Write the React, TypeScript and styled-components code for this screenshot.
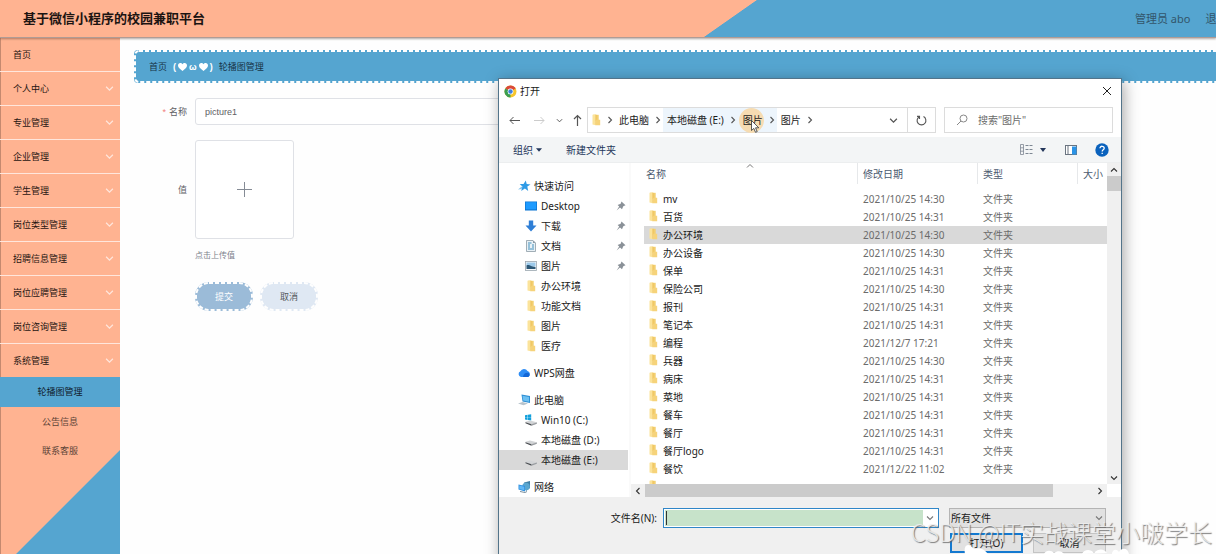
import React from "react";
import styled, { createGlobalStyle, css } from "styled-components";

const BLUE = "#55a5d0";
const PEACH = "#ffb391";

const GlobalStyle = createGlobalStyle`
  *, *::before, *::after { box-sizing: border-box; }
  body {
    margin: 0;
    background: #fefefe;
    color: #222;
    font: 9px/14px "Liberation Sans", "Noto Sans CJK SC", sans-serif;
  }
  button, input, select { font: inherit; color: inherit; margin: 0; }
  a { color: inherit; text-decoration: none; }
  ul { list-style: none; margin: 0; padding: 0; }
`;

const Page = styled.div`
  position: relative;
  display: flex;
  flex-direction: column;
  height: 100vh;
  overflow: hidden;
`;

/* ---------- admin page ---------- */

const Header = styled.header`
  position: relative;
  z-index: 1;
  display: flex;
  align-items: center;
  justify-content: space-between;
  flex: none;
  height: 38px;
  padding-left: 23px;
  background: linear-gradient(145deg, ${PEACH} 59.6%, ${BLUE} 59.7%);
  border-bottom: 1px solid #b09c95;
  box-shadow: 0 1px 2px rgba(60, 40, 30, 0.4);
`;

const Title = styled.h1`
  margin: 0;
  font-size: 13px;
  line-height: 20px;
  font-weight: 700;
  color: #1c1412;
`;

const Account = styled.nav`
  display: flex;
  gap: 15px;
  width: 81px;
  overflow: hidden;
  white-space: nowrap;
  font: 11px/16px "Noto Sans", "Noto Sans CJK SC", sans-serif;
  color: #33566b;
`;

const Body = styled.div`
  display: flex;
  flex: 1;
  min-height: 0;
`;

const Sidebar = styled.nav`
  flex: none;
  width: 120px;
  background: linear-gradient(135deg, ${PEACH} calc(100% - 74px), ${BLUE} calc(100% - 73px));
  box-shadow: inset 1px 0 0 rgba(90, 60, 50, 0.35);
`;

const MenuLink = styled.a`
  display: flex;
  align-items: center;
  justify-content: space-between;
  height: 34px;
  padding: 0 6px 0 13px;
  border-bottom: 1px solid #ffe6dc;
  color: #1f1511;
`;

const MenuItem = styled.li`
  &:last-child > ${MenuLink} { height: 33px; border-bottom: 0; }
`;

const SubLink = styled.a<{ $active?: boolean }>`
  display: flex;
  align-items: center;
  justify-content: center;
  height: 29px;
  color: #5c4337;
  ${(p) => p.$active && css`
    height: 30px;
    background: ${BLUE};
    color: #10202c;
  `}
`;

const Main = styled.main`
  flex: 1;
  min-width: 0;
  padding: 12px 0 0 14px;
  overflow: hidden;
`;

const Breadcrumb = styled.nav`
  position: relative;
  display: flex;
  align-items: center;
  gap: 6px;
  height: 33px;
  margin-right: -20px;
  padding-left: 15px;
  border-radius: 4px;
  background: ${BLUE};
  color: #173447;
`;

const Face = styled.span`
  display: flex;
  align-items: center;
  gap: 2px;
  color: #fff;
  font-weight: 700;
`;

const Frame = styled.svg`
  position: absolute;
  inset: 0;
  width: 100%;
  height: 100%;
  fill: none;
  stroke: #fefefe;
  stroke-width: 2px;
  stroke-dasharray: 4 2;
  rect { width: calc(100% - 2px); height: calc(100% - 2px); }
`;

const Form = styled.form`
  display: flex;
  flex-direction: column;
  gap: 15px;
  margin-right: -20px;
  padding-top: 15px;
`;

const Field = styled.div`
  display: flex;
  align-items: center;
  gap: 8px;
`;

const Label = styled.label`
  flex: none;
  width: 53px;
  text-align: right;
  color: #5e6065;
`;

const Star = styled.span`
  margin-right: 3px;
  color: #f28080;
`;

const TextBox = styled.input`
  flex: 0 0 60%;
  min-width: 0;
  height: 27px;
  padding: 0 9px;
  border: 1px solid #dfe1e6;
  border-radius: 3px;
  background: #fff;
  color: #5e6065;
  outline: none;
`;

const Upload = styled.button`
  display: flex;
  align-items: center;
  justify-content: center;
  width: 99px;
  height: 99px;
  padding: 0;
  border: 1px solid #dfe1e6;
  border-radius: 3px;
  background: #fff;
`;

const Hint = styled.p`
  margin: -5px 0 0 61px;
  font-size: 8px;
  line-height: 14px;
  color: #7d828c;
`;

const Actions = styled.div`
  display: flex;
  gap: 7px;
  margin: 4px 0 0 61px;
`;

const Pill = styled.button<{ $primary?: boolean }>`
  position: relative;
  width: 58px;
  height: 29px;
  padding: 0;
  border: 0;
  border-radius: 14px;
  background: ${(p) => (p.$primary ? "#9bbbd8" : "#dfe8f3")};
  color: ${(p) => (p.$primary ? "#fff" : "#55585e")};
`;

/* ---------- file dialog ---------- */

const Dialog = styled.section`
  position: absolute;
  z-index: 2;
  top: 78px;
  right: 94px;
  width: 624px;
  display: flex;
  flex-direction: column;
  border: 1px solid #53748a;
  background: #fff;
  box-shadow: 2px 3px 14px rgba(0, 0, 0, 0.35);
  font: 10px/16px "Noto Sans", "Noto Sans CJK SC", sans-serif;
  color: #1a1a1a;
`;

const TitleBar = styled.header`
  display: flex;
  align-items: center;
  gap: 3px;
  height: 24px;
  padding: 0 8px 0 5px;
`;

const DialogTitle = styled.h2`
  flex: 1;
  margin: 0;
  font-size: 10px;
  line-height: 14px;
  font-weight: 400;
`;

const IconButton = styled.button<{ $w?: number }>`
  display: flex;
  align-items: center;
  justify-content: center;
  flex: none;
  width: ${(p) => p.$w ?? 12}px;
  height: 100%;
  padding: 0;
  border: 0;
  background: none;
`;

const NavBar = styled.div`
  display: flex;
  align-items: center;
  height: 26px;
  margin: 4px 8px 4px 7px;
`;

const Arrows = styled.div`
  display: flex;
  align-items: center;
  gap: 8px;
  width: 81px;
  height: 26px;
`;

const Address = styled.div`
  display: flex;
  align-items: center;
  flex: 1;
  height: 26px;
  border: 1px solid #dcdcdc;
`;

const Crumbs = styled.ol`
  display: flex;
  align-items: center;
  flex: 1;
  height: 100%;
  margin: 0;
  padding: 0;
  list-style: none;
`;

const Crumb = styled.li<{ $hot?: boolean }>`
  display: flex;
  align-items: center;
  height: 100%;
  background: ${(p) => (p.$hot ? "#edf5fc" : "none")};
`;

const CrumbButton = styled.button`
  position: relative;
  height: 100%;
  padding: 0 4px;
  border: 0;
  background: none;
`;

const CrumbText = styled.span`
  position: relative;
`;

const Halo = styled.span`
  position: absolute;
  left: 0;
  top: 0;
  width: 25px;
  height: 25px;
  border-radius: 50%;
  background: #f6dcb2;
`;

const Pointer = styled.svg`
  position: absolute;
  left: 12px;
  top: 12px;
`;

const Refresh = styled(IconButton)`
  border-left: 1px solid #dcdcdc;
`;

const Search = styled.label`
  display: flex;
  align-items: center;
  gap: 10px;
  width: 169px;
  height: 26px;
  margin-left: 8px;
  padding-left: 11px;
  border: 1px solid #dcdcdc;
`;

const SearchInput = styled.input`
  flex: 1;
  min-width: 0;
  padding: 0;
  border: 0;
  outline: none;
  background: none;
  &::placeholder { color: #6b6b6b; opacity: 1; }
`;

const Toolbar = styled.div`
  display: flex;
  align-items: center;
  height: 26px;
  padding: 0 6px 0 10px;
  border-bottom: 1px solid #eceeef;
  background: #f3f5f6;
  color: #23365a;
`;

const ToolButton = styled.button`
  display: flex;
  align-items: center;
  gap: 3px;
  padding: 0 4px;
  margin-right: 16px;
  border: 0;
  background: none;
`;

const ToolGroup = styled.div`
  display: flex;
  align-items: center;
  margin-left: auto;
  height: 100%;
`;

const Panes = styled.div`
  display: flex;
  height: 334px;
`;

const Tree = styled.nav`
  display: flex;
  flex-direction: column;
  gap: 7px;
  flex: none;
  width: 132px;
  padding-top: 13px;
  border-right: 2px solid #fafafa;
`;

const TreeLink = styled.a<{ $level: number; $on?: boolean }>`
  display: flex;
  align-items: center;
  gap: ${(p) => (p.$level ? 4 : 3)}px;
  height: 20px;
  margin-right: 1px;
  padding: 0 2px 0 ${(p) => (p.$level ? 26 : 19)}px;
  background: ${(p) => (p.$on ? "#d9d9d9" : "none")};
  svg:first-child { flex: none; }
  svg:nth-of-type(2) { margin-left: auto; }
`;

const Files = styled.div`
  display: flex;
  flex-direction: column;
  flex: 1;
  min-width: 0;
`;

const FilesBody = styled.div`
  display: flex;
  height: 321px;
`;

const TableClip = styled.div`
  flex: 1;
  min-width: 0;
  overflow: hidden;
  padding-left: 13px;
`;

const Table = styled.table`
  width: 100%;
  table-layout: fixed;
  border-collapse: separate;
  border-spacing: 0;
  tbody::before { content: ""; display: block; height: 6px; }
`;

const Th = styled.th<{ $w?: number }>`
  position: relative;
  width: ${(p) => (p.$w ? `${p.$w}px` : "auto")};
  height: 21px;
  padding: 0 0 0 5px;
  border-right: 1px solid #e6e8ea;
  text-align: left;
  font-weight: 400;
  color: #4c5a70;
  white-space: nowrap;
  &:first-child { padding-left: 2px; }
  &:last-child { border-right: 0; }
`;

const SortMark = styled.svg`
  position: absolute;
  left: 102px;
  top: 0;
`;

const Row = styled.tr<{ $on?: boolean }>`
  background: ${(p) => (p.$on ? "#d9d9d9" : "none")};
`;

const Td = styled.td`
  height: 18px;
  padding: 0 0 0 5px;
  color: #6b6b6b;
  white-space: nowrap;
`;

const FileName = styled.span`
  display: flex;
  align-items: center;
  gap: 5px;
  height: 18px;
  color: #1a1a1a;
  svg { margin-bottom: 2px; }
`;

const VScroll = styled.div`
  display: flex;
  flex-direction: column;
  justify-content: space-between;
  width: 14px;
  background: #f0f0f0;
`;

const VTop = styled.div`
  display: flex;
  flex-direction: column;
`;

const VThumb = styled.div`
  height: 15px;
  background: #cbcbcb;
`;

const HScroll = styled.div`
  display: flex;
  height: 13px;
  margin: 0 14px 0 0;
  background: #f0f0f0;
`;

const HThumb = styled.div`
  flex: 0 0 408px;
  margin-right: auto;
  background: #cbcbcb;
`;

const ArrowCell = styled.span`
  display: flex;
  align-items: center;
  justify-content: center;
  flex: none;
  width: 14px;
  height: 13px;
`;

const Footer = styled.footer`
  display: flex;
  flex-direction: column;
  gap: 5px;
  padding: 11px 15px 24px 0;
  background: #f0f0f0;
`;

const FooterRow = styled.div`
  display: flex;
  justify-content: flex-end;
  gap: 10px;
`;

const NameField = styled.div`
  display: flex;
  align-items: center;
  gap: 6px;
`;

const Combo = styled.div`
  display: flex;
  width: 276px;
  height: 20px;
  padding: 1px;
  border: 1px solid #2f86c8;
  background: #fff;
`;

const ComboInput = styled.input`
  flex: 1;
  min-width: 0;
  border: 0;
  outline: none;
  padding: 0 2px;
  background: linear-gradient(#333, #333) 1px 50% / 1px 14px no-repeat #c7e3ca;
`;

const SelectBox = styled.div`
  position: relative;
  width: 157px;
  height: 20px;
  svg { position: absolute; right: 3px; top: 6px; pointer-events: none; }
`;

const Select = styled.select`
  appearance: none;
  width: 100%;
  height: 100%;
  padding: 0 1px;
  border: 1px solid #b4b4b4;
  border-radius: 0;
  background: #e1e1e1;
`;

const DialogButton = styled.button<{ $primary?: boolean }>`
  width: 73px;
  height: 20px;
  padding: 0;
  border: ${(p) => (p.$primary ? "2px solid #1479d0" : "1px solid #c4c4c4")};
  background: #e1e1e1;
`;

const Watermark = styled.div`
  position: absolute;
  z-index: 3;
  right: 4px;
  bottom: 4px;
  white-space: nowrap;
  font: 300 24px/36px "Noto Sans CJK SC", sans-serif;
  color: rgba(240, 240, 240, 0.85);
  text-shadow: 1px 1px 1px rgba(90, 90, 90, 0.8);
  pointer-events: none;
`;

const Smudge = styled.svg`
  position: absolute;
  z-index: 3;
  right: 76px;
  bottom: 0;
  pointer-events: none;
`;

/* ---------- icons ---------- */

type Dir = "up" | "down" | "left" | "right";
const CHEVRONS: Record<Dir, string> = {
  up: "M1 5.5 4 2.5 7 5.5",
  down: "M1 2.5 4 5.5 7 2.5",
  left: "M5.5 1 2.5 4 5.5 7",
  right: "M2.5 1 5.5 4 2.5 7",
};

const Chevron = ({ dir, color = "#555", size = 8 }: { dir: Dir; color?: string; size?: number }) => (
  <svg width={size} height={size} viewBox="0 0 8 8" fill="none" stroke={color} strokeWidth="1.1">
    <path d={CHEVRONS[dir]} />
  </svg>
);

const Heart = () => (
  <svg width="9" height="8" viewBox="0 0 9 8" fill="#fff">
    <path d="M4.5 8C2 6 0 4.600 0 2.500 0 1 1 0 2.300 0c.9 0 1.700.5 2.200 1.300C5 .5 5.800 0 6.700 0 8 0 9 1 9 2.500 9 4.600 7 6 4.500 8z" />
  </svg>
);

const FolderShape = () => (
  <>
    <path d="M1 .800h5.700v6H1z" fill="#f3cf70" />
    <path d="M.5.800 3.800.3v10.900L.5 10.600z" fill="#fbe39a" />
    <path d="M3.500.800h1v10h-1z" fill="#eec25a" />
    <path d="M4.300 5.800h3.900v5.400H3.500z" fill="#f6d37a" />
  </>
);

const Folder = () => (
  <svg width="9" height="12" viewBox="0 0 9 12"><FolderShape /></svg>
);

const Pin = () => (
  <svg width="10" height="10" viewBox="0 0 10 10" fill="#8a9198">
    <path d="M5.500.5 9.500 4.300 8.300 4.800 7.300 5.200 6 8.300 4 6.400.6 9.500 3.200 5.600 1.600 4 4.700 2.700 5 1.700z" />
  </svg>
);

const Drive = ({ win }: { win?: boolean }) => (
  <svg width="12" height="12" viewBox="0 0 12 12">
    {win && <path d="M0 1.200 2.600.8v2.400H0zM3 .7 6.200.2v3H3zM0 3.600h2.600V6L0 5.600zM3 3.600h3.200v3L3 6.100z" fill="#12a0dc" />}
    <path d="M.5 7.800 5 6.600l6.800 1.700v1.400L6.500 11.600.5 9z" fill="#d2d4d6" />
    <path d="M.5 8.300 6.500 10.200v1.500L.5 9.300z" fill="#4b4e52" />
    <path d="M6.500 10.200l5.300-1.700v1.300l-5.300 1.900z" fill="#9a9da1" />
  </svg>
);

const Glyph = ({ kind }: { kind: string }) => {
  switch (kind) {
    case "folder":
      return <svg width="12" height="12" viewBox="-2 0 12 12"><FolderShape /></svg>;
    case "star":
      return <svg width="13" height="12" viewBox="0 0 13 12"><path d="M7.800.5 8.700 4l3.800.6-3.200 2 .9 4.400L6.900 8.600 3.200 11l1.200-4.500L1.700 4.100l3.800-.2z" fill="#2f9be6" /><path d="M0 9.500 4.500 6l-.8 3z" fill="#7cc0ee" /></svg>;
    case "desktop":
      return <svg width="12" height="12" viewBox="0 0 12 12"><rect y="1.500" width="12" height="9" fill="#0b74d1" /><rect x=".7" y="2.200" width="10.600" height="7.200" fill="#1e9bff" /></svg>;
    case "download":
      return <svg width="12" height="12" viewBox="0 0 12 12"><path d="M3.800.5h4.400v5H11.500L6 11.500.5 5.500h3.300z" fill="#2f7fd6" /></svg>;
    case "doc":
      return <svg width="12" height="12" viewBox="0 0 12 12"><path d="M1.500.5h6.500L10.500 3v8.500h-9z" fill="#e9f1f6" stroke="#8b9aa5" strokeWidth=".8" /><path d="M3 3h3.500M3 5h2M7 5h2M3 7h2M7 7h2M3 9h6" stroke="#4391bd" strokeWidth="1" /><path d="M8 .5V3h2.500" fill="#8b9aa5" /></svg>;
    case "picture":
      return <svg width="12" height="12" viewBox="0 0 12 12"><rect x=".4" y="1.400" width="11.200" height="9" fill="#f6f8fa" stroke="#9aa5ae" strokeWidth=".8" /><rect x="1.500" y="2.500" width="9" height="4" fill="#9cc9ea" /><path d="M1.500 5.500c3-1.500 4 1.500 9 1.500v2h-9z" fill="#2c5877" /></svg>;
    case "cloud":
      return <svg width="13" height="12" viewBox="0 0 13 12"><path d="M3 10a3 3 0 0 1-.6-5.700A4 4 0 0 1 9.500 4 3.200 3.200 0 0 1 10 10z" fill="#2e8df5" /><path d="M5 10c.2-3 2.500-4.500 5-4.200A2.200 2.200 0 0 1 10.200 10z" fill="#1266d6" /></svg>;
    case "pc":
      return <svg width="13" height="12" viewBox="0 0 13 12"><path d="M3.500.5 12 2v7L4.500 7.500z" fill="#2f8fd4" /><path d="M4.500 1.700l6.500 1.200v4.800L5.200 6.500z" fill="#6cc0f2" /><path d="M0 9.500 4.500 8l5.500 1.500L5.500 11.200z" fill="#b7c3cc" /></svg>;
    case "net":
      return <svg width="13" height="12" viewBox="0 0 13 12"><path d="M6 1.500 12 0v7L8 10z" fill="#3f7fa6" /><circle cx="8" cy="5.500" r="3.800" fill="#5aa6cf" /><path d="M.5 3.500 7 5v5.500L.5 8.500z" fill="#2f8fe0" /><path d="M1.300 4.600 6.200 5.800v3.500L1.300 7.900z" fill="#62b7f5" /><path d="M2 10.500l5 1 2-1" stroke="#7c8f9c" fill="none" /></svg>;
    case "win":
      return <Drive win />;
    default:
      return <Drive />;
  }
};

const ChromeLogo = () => (
  <svg width="13" height="13" viewBox="0 0 13 13">
    <circle cx="6.500" cy="6.500" r="6" fill="#f6c52d" />
    <path d="M6.500 6.500 1.300 3.500A6 6 0 0 1 11.700 3.500z" fill="#d9493b" />
    <path d="M6.500 6.500 1.300 3.500A6 6 0 0 0 6.500 12.500z" fill="#3a9e53" />
    <circle cx="6.500" cy="6.500" r="2.900" fill="#fff" />
    <circle cx="6.500" cy="6.500" r="2.200" fill="#3f7fe0" />
  </svg>
);

/* ---------- data ---------- */

const MENU = ["首页", "个人中心", "专业管理", "企业管理", "学生管理", "岗位类型管理", "招聘信息管理", "岗位应聘管理", "岗位咨询管理", "系统管理"];
const SUBMENU = ["轮播图管理", "公告信息", "联系客服"];

type Node = { icon: string; name: string; level: number; pin?: boolean; on?: boolean };
const TREE: Node[][] = [
  [
    { icon: "star", name: "快速访问", level: 0 },
    { icon: "desktop", name: "Desktop", level: 1, pin: true },
    { icon: "download", name: "下载", level: 1, pin: true },
    { icon: "doc", name: "文档", level: 1, pin: true },
    { icon: "picture", name: "图片", level: 1, pin: true },
    { icon: "folder", name: "办公环境", level: 1 },
    { icon: "folder", name: "功能文档", level: 1 },
    { icon: "folder", name: "图片", level: 1 },
    { icon: "folder", name: "医疗", level: 1 },
  ],
  [{ icon: "cloud", name: "WPS网盘", level: 0 }],
  [
    { icon: "pc", name: "此电脑", level: 0 },
    { icon: "win", name: "Win10 (C:)", level: 1 },
    { icon: "drive", name: "本地磁盘 (D:)", level: 1 },
    { icon: "drive", name: "本地磁盘 (E:)", level: 1, on: true },
  ],
  [{ icon: "net", name: "网络", level: 0 }],
];

const FILES: [string, string][] = [
  ["mv", "2021/10/25 14:30"],
  ["百货", "2021/10/25 14:31"],
  ["办公环境", "2021/10/25 14:30"],
  ["办公设备", "2021/10/25 14:30"],
  ["保单", "2021/10/25 14:31"],
  ["保险公司", "2021/10/25 14:30"],
  ["报刊", "2021/10/25 14:31"],
  ["笔记本", "2021/10/25 14:31"],
  ["编程", "2021/12/7 17:21"],
  ["兵器", "2021/10/25 14:30"],
  ["病床", "2021/10/25 14:31"],
  ["菜地", "2021/10/25 14:31"],
  ["餐车", "2021/10/25 14:31"],
  ["餐厅", "2021/10/25 14:31"],
  ["餐厅logo", "2021/10/25 14:31"],
  ["餐饮", "2021/12/22 11:02"],
];

/* ---------- views ---------- */

const DashFrame = ({ radius }: { radius: number }) => (
  <Frame aria-hidden="true">
    <rect x="1" y="1" rx={radius} />
  </Frame>
);

const FileDialog = () => (
  <Dialog role="dialog" aria-label="打开">
    <TitleBar>
      <ChromeLogo />
      <DialogTitle>打开</DialogTitle>
      <IconButton aria-label="关闭">
        <svg width="10" height="10" viewBox="0 0 10 10" stroke="#222" strokeWidth="1"><path d="M1 1l8 8M9 1 1 9" /></svg>
      </IconButton>
    </TitleBar>

    <NavBar>
      <Arrows>
        <IconButton aria-label="后退" $w={16}>
          <svg width="11" height="9" viewBox="0 0 11 9" fill="none" stroke="#555"><path d="M11 4.500H1M4.500 1 1 4.500 4.500 8" /></svg>
        </IconButton>
        <IconButton aria-label="前进" $w={18}>
          <svg width="11" height="9" viewBox="0 0 11 9" fill="none" stroke="#ccc"><path d="M0 4.500h10M6.500 1 10 4.500 6.500 8" /></svg>
        </IconButton>
        <IconButton aria-label="最近位置" $w={7}><Chevron dir="down" color="#555" size={7} /></IconButton>
        <IconButton aria-label="上移" $w={12}>
          <svg width="9" height="12" viewBox="0 0 9 12" fill="none" stroke="#555" strokeWidth="1.200"><path d="M4.500 12V1.500M1 5 4.500 1.500 8 5" /></svg>
        </IconButton>
      </Arrows>
      <Address>
        <Crumbs>
          <Crumb><IconButton aria-label="文件夹" $w={16}><Folder /></IconButton><IconButton as="span" $w={11}><Chevron dir="right" /></IconButton></Crumb>
          <Crumb><CrumbButton>此电脑</CrumbButton><IconButton as="span" $w={10}><Chevron dir="right" /></IconButton></Crumb>
          <Crumb $hot><CrumbButton>本地磁盘 (E:)</CrumbButton><IconButton as="span" $w={11}><Chevron dir="right" /></IconButton></Crumb>
          <Crumb $hot>
            <CrumbButton>
              <Halo />
              <CrumbText>图片</CrumbText>
              <Pointer width="9" height="13" viewBox="0 0 9 13"><path d="M.5.5v10l2.300-2.100 1.700 3.900 1.700-.7-1.700-3.800H7.800z" fill="#fff" stroke="#333" strokeWidth=".8" /></Pointer>
            </CrumbButton>
            <IconButton as="span" $w={10}><Chevron dir="right" /></IconButton>
          </Crumb>
          <Crumb><CrumbButton>图片</CrumbButton><IconButton as="span" $w={10}><Chevron dir="right" /></IconButton></Crumb>
        </Crumbs>
        <IconButton aria-label="历史" $w={28}><Chevron dir="down" size={9} /></IconButton>
        <Refresh aria-label="刷新" $w={28}>
          <svg width="11" height="11" viewBox="0 0 11 11" fill="none" stroke="#555" strokeWidth="1.100"><path d="M7.500 1.600A4.400 4.400 0 1 1 3.300 1.700M3.500 4V1.400H1" /></svg>
        </Refresh>
      </Address>
      <Search>
        <svg width="12" height="12" viewBox="0 0 12 12" fill="none" stroke="#888"><circle cx="7.500" cy="4.500" r="3.500" /><path d="M5 7 1 11" /></svg>
        <SearchInput aria-label="搜索" placeholder={'搜索"图片"'} />
      </Search>
    </NavBar>

    <Toolbar>
      <ToolButton>组织 <svg width="6" height="4" viewBox="0 0 7 4" fill="#23365a"><path d="M0 0h7L3.500 4z" /></svg></ToolButton>
      <ToolButton>新建文件夹</ToolButton>
      <ToolGroup>
        <IconButton aria-label="视图" $w={14}>
          <svg width="13" height="11" viewBox="0 0 13 11" fill="none" stroke="#7d8793"><path d="M.5.500h3v10h-3zM.5 3.800h3M.5 7.200h3" strokeWidth=".8" /><path d="M5.500 1.500h3M9.500 1.500h3M5.500 5.500h3M9.500 5.500h3M5.500 9.500h3M9.500 9.500h3" /></svg>
        </IconButton>
        <IconButton aria-label="更多视图" $w={20}>
          <svg width="6" height="4" viewBox="0 0 6 4" fill="#23365a"><path d="M0 0h6L3 4z" /></svg>
        </IconButton>
        <IconButton aria-label="预览窗格" $w={36}>
          <svg width="12" height="10" viewBox="0 0 12 10"><rect x=".5" y=".5" width="11" height="9" fill="#fff" stroke="#6a7480" /><path d="M3 1v8" stroke="#6a7480" /><rect x="7" y="1.500" width="4.500" height="8" fill="#2b93e6" /></svg>
        </IconButton>
        <IconButton aria-label="帮助" $w={26}>
          <svg width="14" height="14" viewBox="0 0 14 14"><circle cx="7" cy="7" r="6.700" fill="#0a62bd" /><path d="M5 5.300c0-2.800 4.200-2.600 4.200 0 0 1.500-2 1.500-2 3.200M7.200 9.700v1.300" fill="none" stroke="#fff" strokeWidth="1.300" /></svg>
        </IconButton>
      </ToolGroup>
    </Toolbar>

    <Panes>
      <Tree aria-label="位置">
        {TREE.map((group, i) => (
          <ul key={i}>
            {group.map((n) => (
              <li key={n.name}>
                <TreeLink href="#" $level={n.level} $on={n.on}>
                  <Glyph kind={n.icon} />
                  {n.name}
                  {n.pin && <Pin />}
                </TreeLink>
              </li>
            ))}
          </ul>
        ))}
      </Tree>
      <Files>
        <FilesBody>
          <TableClip>
            <Table>
              <thead>
                <tr>
                  <Th $w={214}>
                    名称
                    <SortMark width="8" height="5" viewBox="0 0 8 5" fill="none" stroke="#777"><path d="M1 4.500 4 1.500 7 4.500" /></SortMark>
                  </Th>
                  <Th $w={120}>修改日期</Th>
                  <Th $w={100}>类型</Th>
                  <Th>大小</Th>
                </tr>
              </thead>
              <tbody>
                {FILES.map(([name, date]) => (
                  <Row key={name} $on={name === "办公环境"}>
                    <Td><FileName><Folder />{name}</FileName></Td>
                    <Td>{date}</Td>
                    <Td>文件夹</Td>
                    <Td />
                  </Row>
                ))}
                <Row><Td><FileName><Folder /></FileName></Td><Td /><Td /><Td /></Row>
              </tbody>
            </Table>
          </TableClip>
          <VScroll>
            <VTop>
              <ArrowCell><Chevron dir="up" color="#333" /></ArrowCell>
              <VThumb />
            </VTop>
            <ArrowCell><Chevron dir="down" color="#333" /></ArrowCell>
          </VScroll>
        </FilesBody>
        <HScroll>
          <ArrowCell><Chevron dir="left" color="#333" /></ArrowCell>
          <HThumb />
          <ArrowCell><Chevron dir="right" color="#333" /></ArrowCell>
        </HScroll>
      </Files>
    </Panes>

    <Footer>
      <FooterRow>
        <NameField>
          <label htmlFor="filename">文件名(N):</label>
          <Combo>
            <ComboInput id="filename" />
            <IconButton aria-label="历史文件名" $w={14}><Chevron dir="down" color="#777" /></IconButton>
          </Combo>
        </NameField>
        <SelectBox>
          <Select aria-label="文件类型"><option>所有文件</option></Select>
          <Chevron dir="down" color="#777" />
        </SelectBox>
      </FooterRow>
      <FooterRow>
        <DialogButton $primary>打开(O)</DialogButton>
        <DialogButton>取消</DialogButton>
      </FooterRow>
    </Footer>
  </Dialog>
);

export default function App() {
  return (
    <Page>
      <GlobalStyle />
      <Header>
        <Title>基于微信小程序的校园兼职平台</Title>
        <Account>
          <a href="#">管理员 abo</a>
          <a href="#">退出登录</a>
        </Account>
      </Header>
      <Body>
        <Sidebar>
          <ul>
            {MENU.map((m, i) => (
              <MenuItem key={m}>
                <MenuLink href="#">
                  {m}
                  {i > 0 && <Chevron dir="down" color="#ffe6dc" size={9} />}
                </MenuLink>
              </MenuItem>
            ))}
          </ul>
          <ul>
            {SUBMENU.map((m, i) => (
              <li key={m}><SubLink href="#" $active={i === 0}>{m}</SubLink></li>
            ))}
          </ul>
        </Sidebar>
        <Main>
          <Breadcrumb>
            <DashFrame radius={4} />
            <a href="#">首页</a>
            <Face>(<Heart /> ω <Heart />)</Face>
            <span>轮播图管理</span>
          </Breadcrumb>
          <Form onSubmit={(e) => e.preventDefault()}>
            <Field>
              <Label htmlFor="name"><Star>*</Star>名称</Label>
              <TextBox id="name" defaultValue="picture1" />
            </Field>
            <Field>
              <Label htmlFor="upload">值</Label>
              <Upload id="upload" type="button" aria-label="上传">
                <svg width="15" height="15" viewBox="0 0 15 15" stroke="#858b95"><path d="M7.500 0v15M0 7.500h15" /></svg>
              </Upload>
            </Field>
            <Hint>点击上传值</Hint>
            <Actions>
              <Pill $primary type="submit"><DashFrame radius={13} />提交</Pill>
              <Pill type="button"><DashFrame radius={13} />取消</Pill>
            </Actions>
          </Form>
        </Main>
      </Body>
      <FileDialog />
      <Smudge width="176" height="10" viewBox="0 0 176 10" fill="#fff" aria-hidden="true">
        <path d="M1 10C0 5 1 1 4 1c3 0 4 3 7 4 5-2 9 0 13 5zM80 10c2-4 7-4 10-1 4-3 8-2 10 1zM118 10c2-5 9-5 12-1 5-5 10-4 13 0zM148 10c0-4 4-6 7-2 3-5 9-4 10 2z" />
      </Smudge>
      <Watermark>CSDN @IT实战课堂小啵学长</Watermark>
    </Page>
  );
}
